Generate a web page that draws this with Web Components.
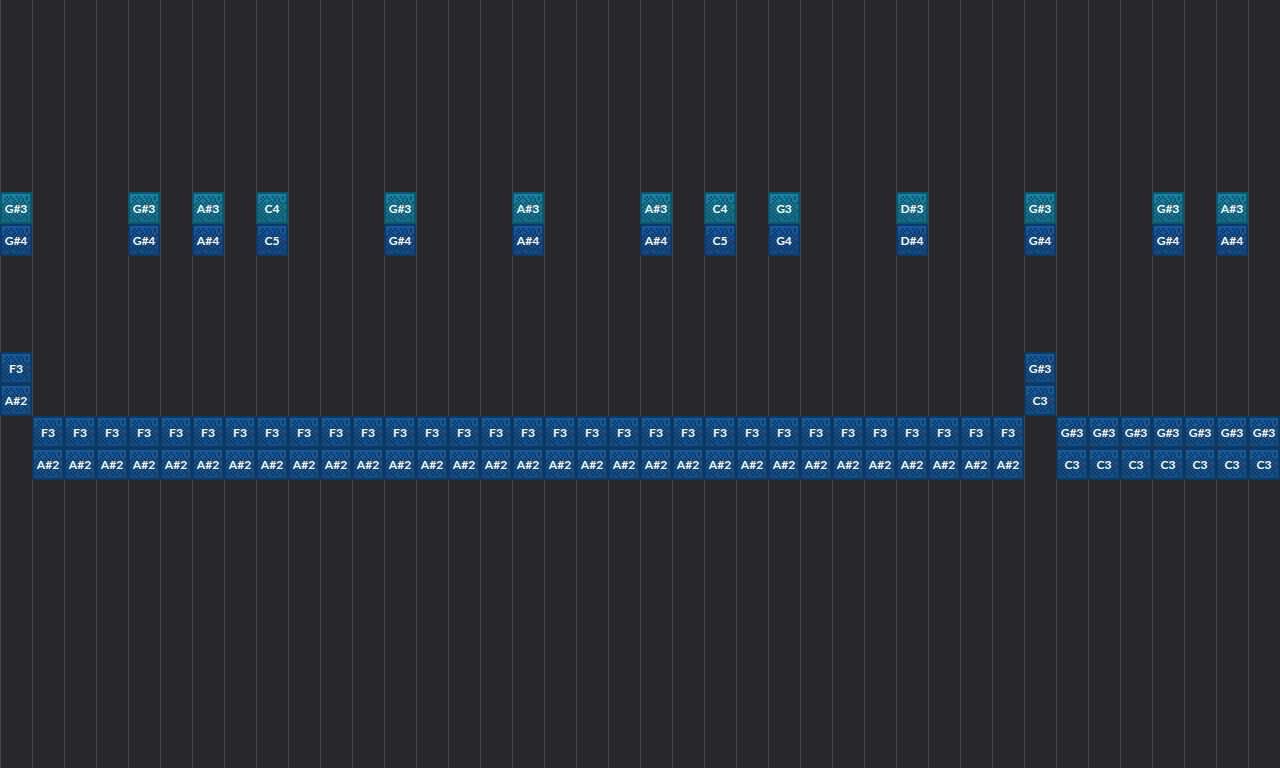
<!DOCTYPE html>
<html lang="en">
<head>
<meta charset="utf-8">
<title>Note block sequence</title>
<style>
html, body { margin: 0; background: #272729; }
</style>
</head>
<body>
<note-timeline>
  <note-track row="7" tone="teal" notes="1:G#3 5:G#3 7:A#3 9:C4 13:G#3 17:A#3 21:A#3 23:C4 25:G3 29:D#3 33:G#3 37:G#3 39:A#3"></note-track>
  <note-track row="8" tone="royal" notes="1:G#4 5:G#4 7:A#4 9:C5 13:G#4 17:A#4 21:A#4 23:C5 25:G4 29:D#4 33:G#4 37:G#4 39:A#4"></note-track>
  <note-track row="12" tone="navy" notes="1:F3 33:G#3"></note-track>
  <note-track row="13" tone="navy" notes="1:A#2 33:C3"></note-track>
  <note-track row="14" tone="navy" notes="2-32:F3 34-40:G#3"></note-track>
  <note-track row="15" tone="navy" notes="2-32:A#2 34-40:C3"></note-track>
</note-timeline>

<template id="timeline-template">
  <style>
    :host {
      display: grid;
      grid-template-columns: minmax(0, 1fr);
      grid-auto-rows: 32px;
      min-height: 100vh;
      overflow: hidden;
      background: repeating-linear-gradient(90deg, #464648 0 1px, #272729 1px 32px);
    }
  </style>
  <slot></slot>
</template>

<template id="track-template">
  <style>
    :host {
      display: grid;
      grid-auto-columns: 32px;
      grid-template-rows: 32px;
    }
  </style>
</template>

<template id="block-template">
  <style>
    :host {
      display: grid;
      place-items: center;
      grid-row: 1;
      --edge: #0f3961;
      --top: #165a9c;
      --bottom: #134b82;
      --weave: #103c69;
      background: linear-gradient(var(--top), var(--bottom)) content-box, var(--edge);
      padding: 2px;
      font: 700 12px/16px Lato, sans-serif;
      color: #f8f8f8;
    }
    :host([tone="teal"]) { --edge: #0e566c; --top: #1583a6; --bottom: #136a86; --weave: #115870; }
    :host([tone="royal"]) { --edge: #0f3866; --top: #15589e; --bottom: #12467c; --weave: #103a6a; }
    svg, span { grid-area: 1 / 1; }
    svg { width: 28px; height: 28px; fill: var(--weave); }
    span { z-index: 1; padding-top: 2px; white-space: nowrap; }
  </style>
  <svg viewBox="0 0 14 14" shape-rendering="crispEdges" aria-hidden="true"><path></path></svg>
  <span><slot></slot></span>
</template>

<script>
const stamp = (host, id) => {
  const root = host.attachShadow({ mode: "open" });
  root.append(document.getElementById(id).content.cloneNode(true));
  return root;
};

// Woven face of a block: each # is one dark texel.
const texture = [
  "..............",
  "..#.#..#.#..#.",
  ".#.#.#..#.#.#.",
  "..#...#.#.#...",
  ".#.#.#.#.#.#.#",
  "#.#.#.#.#.#.#.",
  ".#.#.#.#.#.#..",
  "#.#.#.#.#.#.#.",
  ".#.#.#.#.#.#.#",
  "#.#.#.#.#.#.#.",
  ".#.#.#.#...#..",
  "#.#.#.#.#.#.#.",
  ".#.#...#.#..#.",
  "....#........."
];
const weave = texture.map((line, y) =>
  [...line].map((c, x) => c === "#" ? `M${x} ${y}h1v1h-1z` : "").join("")).join("");

customElements.define("note-block", class extends HTMLElement {
  constructor() {
    super();
    stamp(this, "block-template").querySelector("path").setAttribute("d", weave);
  }
});

customElements.define("note-track", class extends HTMLElement {
  connectedCallback() {
    if (this.shadowRoot) return;
    const root = stamp(this, "track-template");
    this.style.gridRow = this.getAttribute("row");
    for (const entry of this.getAttribute("notes").split(" ")) {
      const [span, name] = entry.split(":");
      const [first, last = first] = span.split("-").map(Number);
      for (let step = first; step <= last; step++) {
        const block = document.createElement("note-block");
        block.setAttribute("tone", this.getAttribute("tone"));
        block.style.gridColumn = step;
        block.textContent = name;
        root.append(block);
      }
    }
  }
});

customElements.define("note-timeline", class extends HTMLElement {
  constructor() { super(); stamp(this, "timeline-template"); }
});
</script>
</body>
</html>
